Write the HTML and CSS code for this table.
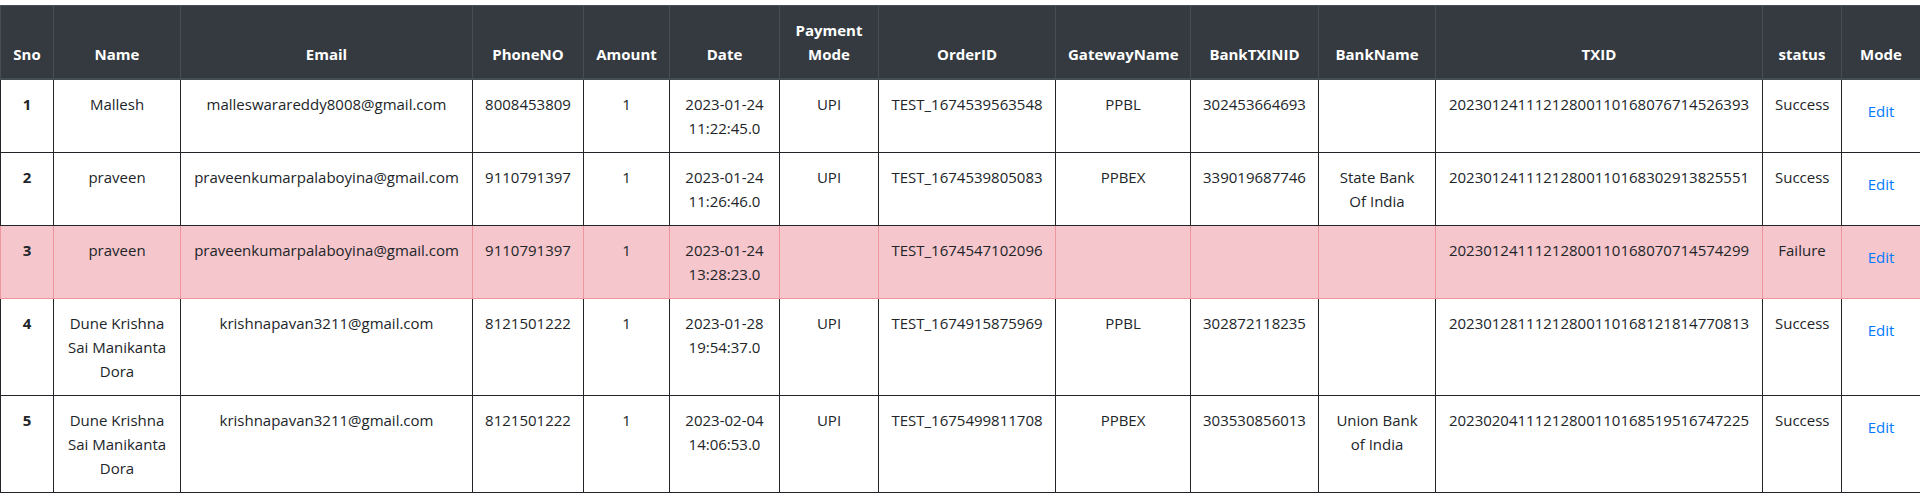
FILE: index.html
```html
<!DOCTYPE html>
<html lang="en">
<head>
<meta charset="utf-8">
<title>Transactions</title>
<link rel="stylesheet" href="styles.css">
</head>
<body>
<table class="tx-table">
  <colgroup>
    <col class="c-sno"><col class="c-name"><col class="c-email"><col class="c-phone"><col class="c-amount"><col class="c-date"><col class="c-pay"><col class="c-order"><col class="c-gw"><col class="c-banktx"><col class="c-bank"><col class="c-txid"><col class="c-status"><col class="c-mode">
  </colgroup>
  <thead>
    <tr>
      <th>Sno</th><th>Name</th><th>Email</th><th>PhoneNO</th><th>Amount</th><th>Date</th><th>Payment Mode</th><th>OrderID</th><th>GatewayName</th><th>BankTXINID</th><th>BankName</th><th>TXID</th><th>status</th><th>Mode</th>
    </tr>
  </thead>
  <tbody>
    <tr>
      <th>1</th><td>Mallesh</td><td>malleswarareddy8008@gmail.com</td><td>8008453809</td><td>1</td><td>2023-01-24 11:22:45.0</td><td>UPI</td><td>TEST_1674539563548</td><td>PPBL</td><td>302453664693</td><td></td><td>20230124111212800110168076714526393</td><td>Success</td><td><button class="btn-link">Edit</button></td>
    </tr>
    <tr>
      <th>2</th><td>praveen</td><td>praveenkumarpalaboyina@gmail.com</td><td>9110791397</td><td>1</td><td>2023-01-24 11:26:46.0</td><td>UPI</td><td>TEST_1674539805083</td><td>PPBEX</td><td>339019687746</td><td>State Bank Of India</td><td>20230124111212800110168302913825551</td><td>Success</td><td><button class="btn-link">Edit</button></td>
    </tr>
    <tr class="row-danger">
      <th>3</th><td>praveen</td><td>praveenkumarpalaboyina@gmail.com</td><td>9110791397</td><td>1</td><td>2023-01-24 13:28:23.0</td><td></td><td>TEST_1674547102096</td><td></td><td></td><td></td><td>20230124111212800110168070714574299</td><td>Failure</td><td><button class="btn-link">Edit</button></td>
    </tr>
    <tr>
      <th>4</th><td>Dune Krishna Sai Manikanta Dora</td><td>krishnapavan3211@gmail.com</td><td>8121501222</td><td>1</td><td>2023-01-28 19:54:37.0</td><td>UPI</td><td>TEST_1674915875969</td><td>PPBL</td><td>302872118235</td><td></td><td>20230128111212800110168121814770813</td><td>Success</td><td><button class="btn-link">Edit</button></td>
    </tr>
    <tr>
      <th>5</th><td>Dune Krishna Sai Manikanta Dora</td><td>krishnapavan3211@gmail.com</td><td>8121501222</td><td>1</td><td>2023-02-04 14:06:53.0</td><td>UPI</td><td>TEST_1675499811708</td><td>PPBEX</td><td>303530856013</td><td>Union Bank of India</td><td>20230204111212800110168519516747225</td><td>Success</td><td><button class="btn-link">Edit</button></td>
    </tr>
  </tbody>
</table>
</body>
</html>
```
FILE: styles.css
```css
html, body {
  margin: 0;
  padding: 0;
  background: #fff;
}
body {
  font-family: "Open Sans", "Noto Sans", "Liberation Sans", sans-serif;
  font-size: 15px;
  line-height: 24px;
  color: #212529;
}
.tx-table {
  margin-top: 5px;
  width: 1920px;
  table-layout: fixed;
  border-collapse: collapse;
  text-align: center;
}
.c-sno { width: 53px; }
.c-name { width: 127px; }
.c-email { width: 292px; }
.c-phone { width: 111px; }
.c-amount { width: 86px; }
.c-date { width: 110px; }
.c-pay { width: 99px; }
.c-order { width: 177px; }
.c-gw { width: 135px; }
.c-banktx { width: 128px; }
.c-bank { width: 117px; }
.c-txid { width: 327px; }
.c-status { width: 79px; }
.c-mode { width: 79px; }

.tx-table th,
.tx-table td {
  padding: 12px;
  vertical-align: top;
  border: 1px solid #212529;
}
.tx-table thead th {
  vertical-align: bottom;
  background: #343a40;
  color: #fff;
  font-weight: 700;
  border: 1px solid #454d55;
  border-bottom-width: 2px;
}
.tx-table tbody th {
  font-weight: 700;
}
.tx-table .row-danger th,
.tx-table .row-danger td {
  background: #f5c6cb;
  border-color: #ed969e;
}
.btn-link {
  display: inline-block;
  font-family: inherit;
  font-size: 15px;
  line-height: 24px;
  padding: 6px 12px;
  border: 1px solid transparent;
  background: transparent;
  color: #007bff;
  cursor: pointer;
}
```
